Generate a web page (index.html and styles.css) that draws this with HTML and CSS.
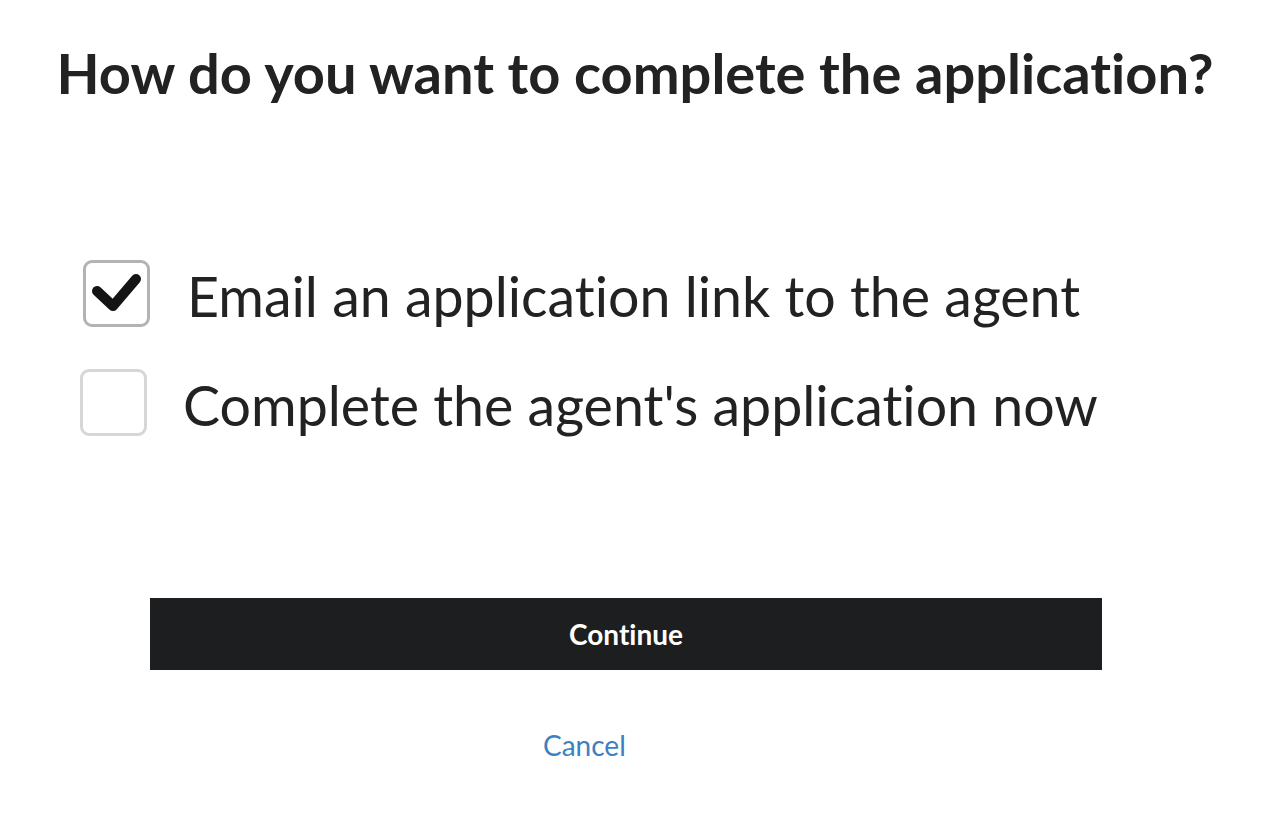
FILE: index.html
```html
<!DOCTYPE html>
<html>
<head>
<meta charset="utf-8">
<link rel="stylesheet" href="styles.css">
</head>
<body>
<div class="page">
  <h1 class="title">How do you want to complete the application?</h1>
  <div class="options">
    <label class="option opt1">
      <span class="box checked">
        <svg class="tick" viewBox="0 0 61 61" width="61" height="61"><path d="M11 28 L27 43 L50 16" fill="none" stroke="#141414" stroke-width="10" stroke-linecap="round" stroke-linejoin="round"/></svg>
      </span>
      <span class="label">Email an application link to the agent</span>
    </label>
    <label class="option opt2">
      <span class="box"></span>
      <span class="label">Complete the agent's application now</span>
    </label>
  </div>
  <div class="actions">
    <button class="continue">Continue</button>
    <a class="cancel" href="#">Cancel</a>
  </div>
</div>
</body>
</html>
```
FILE: styles.css
```css
html, body { margin: 0; padding: 0; background: #fff; }
body { font-family: Lato, "Open Sans", sans-serif; color: #222; font-variant-ligatures: none; }
.page { width: 1286px; height: 820px; display: flex; flex-direction: column; }
.title { margin: 41px 0 0 0; text-align: center; font-size: 56px; font-weight: 700; line-height: 64px; padding-right: 16px; color: #222; }
.options { margin-top: 155px; display: flex; flex-direction: column; gap: 40px; }
.option { display: flex; align-items: flex-start; }
.opt1 { padding-left: 83px; }
.opt2 { padding-left: 80px; }
.box { width: 61px; height: 61px; border: 3px solid #b3b3b3; border-radius: 9px; display: flex; align-items: center; justify-content: center; box-sizing: content-box; flex: none; }
.tick { display: block; }
.opt2 .box { border-color: #d6d6d6; }
.label { font-size: 55.5px; line-height: 67px; padding-top: 2px; margin-left: 37px; color: #222; }
.opt2 .label { margin-left: 36px; }
.actions { margin-top: 160px; display: flex; flex-direction: column; align-items: flex-start; }
.continue { margin-left: 150px; width: 952px; height: 72px; background: #1d1e20; color: #fff; border: none; font-family: Lato, sans-serif; font-variant-ligatures: none; font-weight: 700; font-size: 28px; padding: 0; }
.cancel { margin-top: 58px; margin-left: 543px; color: #3d80c2; font-size: 28px; text-decoration: none; }
```
